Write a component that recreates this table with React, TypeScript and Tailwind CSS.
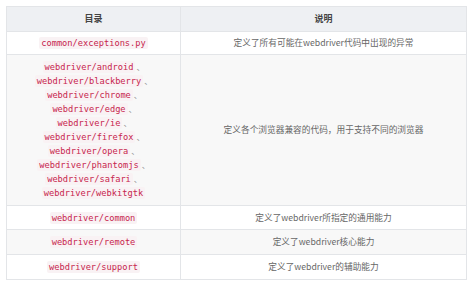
const mono = "font-['DejaVu_Sans_Mono','Liberation_Mono',monospace]";

const browsers = [
  "android",
  "blackberry",
  "chrome",
  "edge",
  "ie",
  "firefox",
  "opera",
  "phantomjs",
  "safari",
  "webkitgtk",
];

const Code = ({ children }: { children: string }) => (
  <code className={`${mono} text-[8.7px] leading-[12px] text-[#c7254e] bg-[#f9f2f4] px-[2px] rounded-[2px]`}>
    {children}
  </code>
);

const Desc = ({ children }: { children: string }) => (
  <td className="border border-[#e3e5e8] text-center text-[8.7px] text-[#666]">{children}</td>
);

const CodeCell = ({ children }: { children: string }) => (
  <td className="border border-[#e3e5e8]">
    <div className="flex justify-center items-center">
      <Code>{children}</Code>
    </div>
  </td>
);

export default function App() {
  return (
    <div className="w-[474px] h-[287px] bg-white pt-[6px] pl-[6px] font-['Noto_Sans_CJK_SC','Noto_Sans',sans-serif]">
      <table className="w-[461px] border-collapse table-fixed">
        <colgroup>
          <col className="w-[174px]" />
          <col />
        </colgroup>
        <thead>
          <tr className="h-[25px] bg-[#eef0f3]">
            <th className="border border-[#e3e5e8] text-[9px] font-semibold text-[#444]">目录</th>
            <th className="border border-[#e3e5e8] text-[9px] font-semibold text-[#444]">说明</th>
          </tr>
        </thead>
        <tbody>
          <tr className="h-[23px] bg-white">
            <CodeCell>common/exceptions.py</CodeCell>
            <Desc>定义了所有可能在webdriver代码中出现的异常</Desc>
          </tr>
          <tr className="h-[151px] bg-[#f8f8f8]">
            <td className="border border-[#e3e5e8]">
              <div className="flex flex-col items-center">
                {browsers.map((b, i) => (
                  <div key={b} className="h-[14px] flex items-center">
                    <Code>{`webdriver/${b}`}</Code>
                    {i < browsers.length - 1 && (
                      <span className="text-[8px] leading-[12px] text-[#999] ml-[1px]">、</span>
                    )}
                  </div>
                ))}
              </div>
            </td>
            <Desc>定义各个浏览器兼容的代码，用于支持不同的浏览器</Desc>
          </tr>
          <tr className="h-[24px] bg-white">
            <CodeCell>webdriver/common</CodeCell>
            <Desc>定义了webdriver所指定的通用能力</Desc>
          </tr>
          <tr className="h-[25px] bg-[#f8f8f8]">
            <CodeCell>webdriver/remote</CodeCell>
            <Desc>定义了webdriver核心能力</Desc>
          </tr>
          <tr className="h-[25px] bg-white">
            <CodeCell>webdriver/support</CodeCell>
            <Desc>定义了webdriver的辅助能力</Desc>
          </tr>
        </tbody>
      </table>
    </div>
  );
}
